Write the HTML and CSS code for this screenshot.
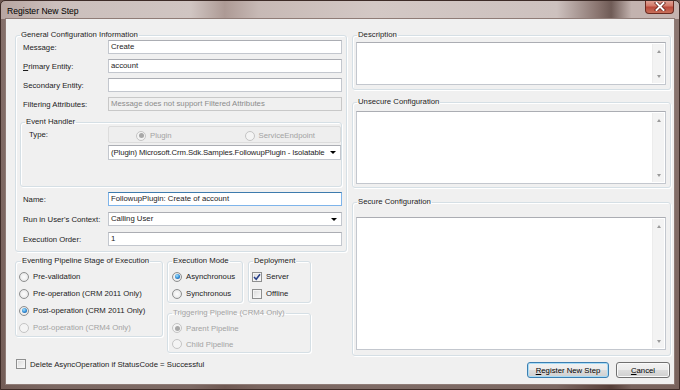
FILE: index.html
```html
<!DOCTYPE html>
<html lang="en">
<head>
    <meta charset="UTF-8">
    <title>Register New Step</title>
    <link rel="stylesheet" href="styles.css">
</head>
<body>
<div class="window">
    <div class="titlebar">
        <span class="title">Register New Step</span>
        <span class="close-btn">
            <svg width="12" height="9" viewBox="0 0 12 9">
                <path d="M2.5 1 L9.5 8 M9.5 1 L2.5 8" stroke="#5a1a12" stroke-width="3.4" stroke-linecap="square"/>
                <path d="M2.5 1 L9.5 8 M9.5 1 L2.5 8" stroke="#fff" stroke-width="2" stroke-linecap="square"/>
            </svg>
        </span>
    </div>

    <div class="client">
        <div class="col-left">
            <fieldset class="group general">
                <legend>General Configuration Information</legend>
                <div class="row first"><label>Message:</label><div class="box">Create</div></div>
                <div class="row"><label><u>P</u>rimary Entity:</label><div class="box">account</div></div>
                <div class="row"><label>Secondary Entity:</label><div class="box"></div></div>
                <div class="row"><label>Filtering Attributes:</label><div class="box disabled">Message does not support Filtered Attributes</div></div>

                <fieldset class="group handler">
                    <legend>Event Handler</legend>
                    <div class="hrow">
                        <label>Type:</label>
                        <div class="type-panel">
                            <span class="opt off plugin"><span class="radio on"></span>Plugin</span>
                            <span class="opt off endpoint"><span class="radio"></span>ServiceEndpoint</span>
                        </div>
                    </div>
                    <div class="hrow">
                        <span></span>
                        <div class="box select assembly">(Plugin) Microsoft.Crm.Sdk.Samples.FollowupPlugin - Isolatable</div>
                    </div>
                </fieldset>

                <div class="row name-row"><label>Name:</label><div class="box focus">FollowupPlugin: Create of account</div></div>
                <div class="row wide"><label>Run in User's Context:</label><div class="box select">Calling User</div></div>
                <div class="row wide"><label>Execution Order:</label><div class="box">1</div></div>
            </fieldset>

            <div class="pipeline">
                <fieldset class="group stage">
                    <legend>Eventing Pipeline Stage of Execution</legend>
                    <div class="opt"><span class="radio"></span>Pre-validation</div>
                    <div class="opt"><span class="radio"></span>Pre-operation (CRM 2011 Only)</div>
                    <div class="opt"><span class="radio on"></span>Post-operation (CRM 2011 Only)</div>
                    <div class="opt off"><span class="radio"></span>Post-operation (CRM4 Only)</div>
                </fieldset>

                <div class="mid">
                    <div class="pair">
                        <fieldset class="group mode">
                            <legend>Execution Mode</legend>
                            <div class="opt"><span class="radio on"></span>Asynchronous</div>
                            <div class="opt"><span class="radio"></span>Synchronous</div>
                        </fieldset>
                        <fieldset class="group deploy">
                            <legend>Deployment</legend>
                            <div class="opt">
                                <span class="check">
                                    <svg width="8" height="8" viewBox="0 0 8 8"><path d="M1 4 L3.2 6.3 L7 1.2" fill="none" stroke="#263f88" stroke-width="1.5"/></svg>
                                </span>Server
                            </div>
                            <div class="opt"><span class="check"></span>Offline</div>
                        </fieldset>
                    </div>
                    <fieldset class="group trigger off">
                        <legend>Triggering Pipeline (CRM4 Only)</legend>
                        <div class="opt"><span class="radio on"></span>Parent Pipeline</div>
                        <div class="opt"><span class="radio"></span>Child Pipeline</div>
                    </fieldset>
                </div>
            </div>

            <div class="opt delete-row"><span class="check"></span>Delete AsyncOperation if StatusCode = Successful</div>
        </div>

        <div class="col-right">
            <fieldset class="group config description">
                <legend>Description</legend>
                <div class="memo"><div class="memo-text"></div><div class="scroll"><i class="up"></i><i class="down"></i></div></div>
            </fieldset>
            <fieldset class="group config unsecure">
                <legend>Unsecure Configuration</legend>
                <div class="memo"><div class="memo-text"></div><div class="scroll"><i class="up"></i><i class="down"></i></div></div>
            </fieldset>
            <fieldset class="group config secure">
                <legend>Secure Configuration</legend>
                <div class="memo"><div class="memo-text"></div><div class="scroll"><i class="up"></i><i class="down"></i></div></div>
            </fieldset>
            <div class="buttons">
                <button class="btn default"><u>R</u>egister New Step</button>
                <button class="btn cancel"><u>C</u>ancel</button>
            </div>
        </div>
    </div>
</div>
</body>
</html>
```

FILE: styles.css
```css
* { box-sizing: border-box; }
body {
    margin: 0;
    font-family: 'Liberation Sans', Arial, sans-serif;
    font-size: 7.75px;
    color: #1c1c1c;
    background: #6e5852;
}
u { text-decoration: underline; }

/* window frame */
.window {
    width: 680px;
    height: 390px;
    display: flex;
    flex-direction: column;
    border: 1px solid #3d2b27;
    border-radius: 5px 5px 0 0;
    background:
        linear-gradient(180deg, rgba(0,0,0,0) 0, rgba(0,0,0,0) 18px, rgba(70,45,38,.45) 18px, rgba(70,45,38,.6) 100%),
        linear-gradient(90deg, #b7a5a1 0%, #cbbfbc 8%, #d0c5c2 28%, #ad9a95 33%, #c7b9b5 38%, #d3c8c5 55%, #cdc1be 82%, #8a7570 88%, #6f5b56 90%, #c3b3af 93%, #c5b3af 100%);
    overflow: hidden;
}
.titlebar {
    height: 18px;
    display: flex;
    justify-content: space-between;
    align-items: flex-start;
    padding: 0 5px 0 6px;
}
.title {
    font-size: 8.6px;
    line-height: 18px;
    padding-top: 1px;
    color: #000;
}
.close-btn {
    width: 29px;
    height: 14px;
    margin-top: -1px;
    border: 1px solid #6a2a20;
    border-top: none;
    border-radius: 0 0 4px 4px;
    background: linear-gradient(180deg, #e3a99d 0%, #d27a69 45%, #b9493a 55%, #c9705a 100%);
    display: flex;
    align-items: center;
    justify-content: center;
}

/* client area */
.client {
    flex: 1;
    margin: 0 5px 5px 5px;
    background: #f0f0f0;
    box-shadow: 0 0 0 1px #8f7c77;
    display: grid;
    grid-template-columns: 332px 319px;
    column-gap: 5px;
    padding: 12px 3px 0 9px;
}
.col-left, .col-right { display: flex; flex-direction: column; }

/* group boxes */
.group {
    margin: 0;
    min-width: 0;
    border: 1px solid #d5dfe5;
    border-radius: 3px;
    box-shadow: inset 1px 1px 0 #fff, 1px 1px 0 #fff;
}
.group legend {
    padding: 0 1px;
    line-height: 8px;
}

.general { padding: 0 4px 5px 4px; }
.row {
    display: grid;
    grid-template-columns: 85px 1fr;
    align-items: center;
    padding-left: 3px;
    margin-top: 5px;
    height: 14px;
}
.row.first { margin-top: 1px; }
.row.name-row { margin-top: 5px; }
.row.wide { margin-top: 6px; }
.row label { white-space: nowrap; }

.box {
    height: 14px;
    line-height: 12px;
    padding: 0 2px;
    background: #fff;
    border: 1px solid #c3c7ce;
    border-top-color: #abadb3;
    white-space: nowrap;
    overflow: hidden;
    position: relative;
}
.box.disabled {
    background: #f0f0f0;
    border-color: #c8c8c8;
    color: #8b8b8b;
}
.box.focus {
    border-color: #7eb4ea;
    border-top-color: #3d7bad;
}
.box.select::after {
    content: "";
    position: absolute;
    right: 4px;
    top: 5px;
    border-left: 3px solid transparent;
    border-right: 3px solid transparent;
    border-top: 3px solid #000;
}
.box.assembly { height: 15px; line-height: 13px; padding-right: 12px; letter-spacing: -0.1px; }

.handler {
    margin-top: 7px;
    padding: 0 0 26px 4px;
}
.hrow {
    display: grid;
    grid-template-columns: 79px 1fr;
    align-items: center;
    padding-left: 4px;
}
.hrow + .hrow { margin-top: 2px; }
.type-panel {
    height: 17px;
    display: grid;
    grid-template-columns: 1fr 1fr;
    align-items: center;
    background: #eeeeee;
    border: 1px solid #dcdcdc;
    border-radius: 2px;
}
.type-panel .plugin { padding-left: 27px; }
.type-panel .endpoint { padding-left: 20px; }

/* radio / check options */
.opt {
    display: flex;
    align-items: center;
    height: 17px;
    white-space: nowrap;
}
.radio {
    width: 10px;
    height: 10px;
    flex: none;
    border-radius: 50%;
    border: 1px solid #8e8f8f;
    background: radial-gradient(circle, #fdfdfd 0, #eeeeee 55%, #d4d4d4 100%);
    display: inline-flex;
    align-items: center;
    justify-content: center;
    margin-right: 4px;
}
.radio.on::after {
    content: "";
    width: 5px;
    height: 5px;
    border-radius: 50%;
    background: radial-gradient(circle at 40% 35%, #a6e3fb 0, #2f8bd6 55%, #173f78 100%);
}
.off, .off .opt { color: #a3a3a3; }
.off .radio {
    border-color: #c4c4c4;
    background: #f4f4f4;
}
.off .radio.on::after { background: #a8a8a8; }

.check {
    width: 10px;
    height: 10px;
    flex: none;
    border: 1px solid #8e8f8f;
    background: linear-gradient(135deg, #d9d9d9, #fbfbfb);
    box-shadow: inset 0 0 0 1px #f4f4f4;
    display: inline-flex;
    align-items: center;
    justify-content: center;
    margin-right: 4px;
}

/* pipeline groups */
.pipeline {
    display: grid;
    grid-template-columns: 148px 144px;
    column-gap: 4px;
    margin-top: 5px;
    align-items: start;
}
.stage { padding: 3px 0 0 3px; }
.stage legend { margin-left: 2px; }
.mid { display: flex; flex-direction: column; }
.pair {
    display: grid;
    grid-template-columns: 76px 63px;
    column-gap: 5px;
}
.mode { padding: 3px 0 0 4px; }
.deploy { padding: 3px 0 0 3px; }
.deploy legend { margin-left: 1px; }
.trigger { margin-top: 6px; padding: 3px 0 0 4px; }
.trigger .opt { height: 16px; }

.delete-row {
    margin-top: 5px;
    padding-left: 1px;
    height: 12px;
}

/* right column */
.config { padding: 0 4px 4px 3px; }
.config legend { margin-left: 1px; }
.memo {
    display: flex;
    background: #fff;
    border: 1px solid #c3c7ce;
    border-top-color: #abadb3;
}
.memo-text { flex: 1; }
.scroll {
    width: 12px;
    margin: 1px 1px 1px 0;
    background: #f3f3f3;
    border-left: 1px solid #ececec;
    display: flex;
    flex-direction: column;
    justify-content: space-between;
    align-items: center;
    padding: 6px 0 5px;
}
.scroll i {
    width: 0;
    height: 0;
    border-left: 2.5px solid transparent;
    border-right: 2.5px solid transparent;
}
.scroll .up { border-bottom: 3px solid #9a9a9a; }
.scroll .down { border-top: 3px solid #9a9a9a; }

.description .memo { margin-top: 3px; height: 43px; }
.unsecure { margin-top: 8px; padding-bottom: 3px; }
.unsecure .memo { margin-top: 5px; height: 73px; }
.secure { margin-top: 10px; padding-bottom: 5px; }
.secure .memo { margin-top: 11px; height: 133px; }

.buttons {
    display: flex;
    justify-content: flex-end;
    gap: 7px;
    margin-top: 6px;
    padding-right: 1px;
}
.btn {
    height: 16px;
    padding: 0;
    font-family: inherit;
    font-size: 7.75px;
    color: #000;
    border: 1px solid #707070;
    border-radius: 3px;
    background: linear-gradient(180deg, #f2f2f2 0%, #ebebeb 48%, #dddddd 52%, #cfcfcf 100%);
    box-shadow: inset 0 0 0 1px #fafafa;
}
.btn.default {
    width: 82px;
    border-color: #3c7fb1;
    box-shadow: inset 0 0 0 1px #a9dcf6;
}
.btn.cancel { width: 54px; }
```
